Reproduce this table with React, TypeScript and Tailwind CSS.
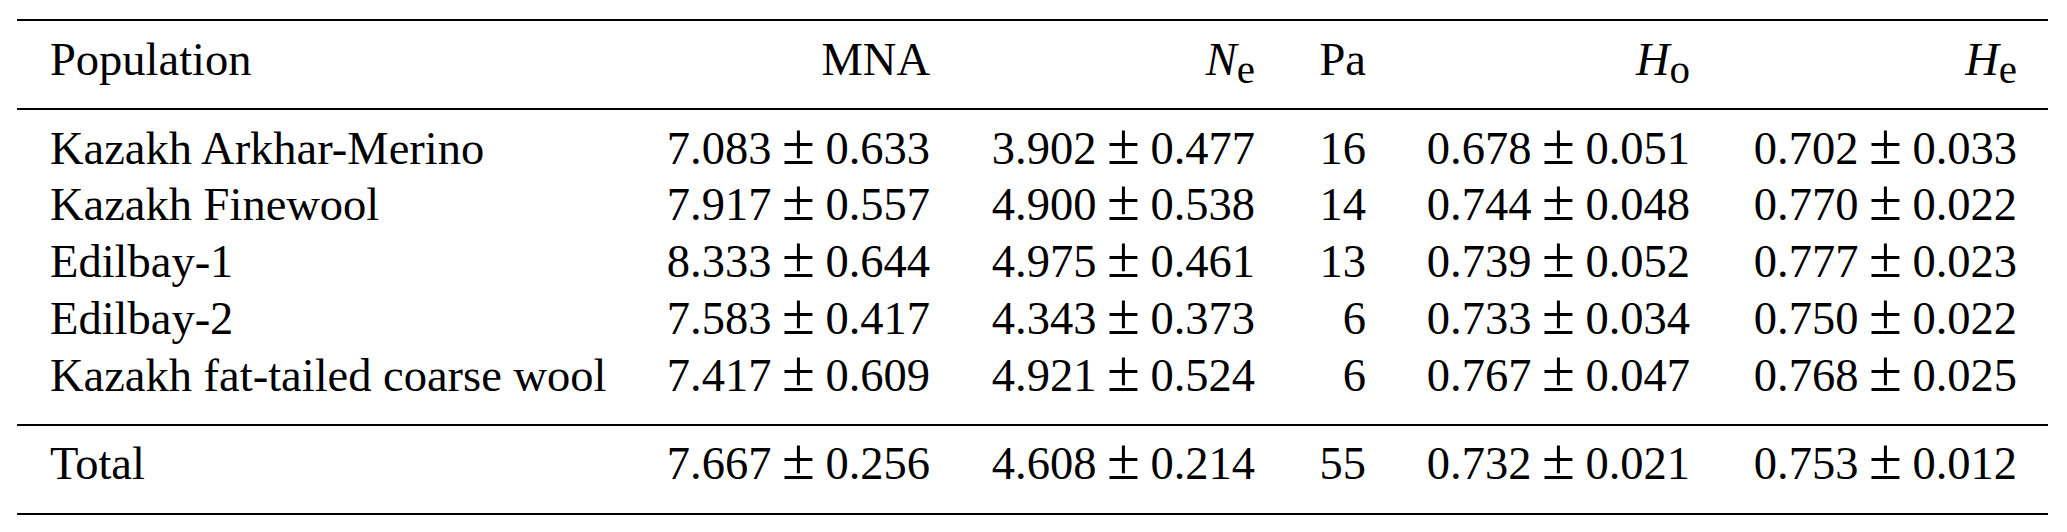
import React from "react";

type Row = {
  name: string;
  mna: [string, string];
  ne: [string, string];
  pa: string;
  ho: [string, string];
  he: [string, string];
};

const rows: Row[] = [
  { name: "Kazakh Arkhar-Merino", mna: ["7.083", "0.633"], ne: ["3.902", "0.477"], pa: "16", ho: ["0.678", "0.051"], he: ["0.702", "0.033"] },
  { name: "Kazakh Finewool", mna: ["7.917", "0.557"], ne: ["4.900", "0.538"], pa: "14", ho: ["0.744", "0.048"], he: ["0.770", "0.022"] },
  { name: "Edilbay-1", mna: ["8.333", "0.644"], ne: ["4.975", "0.461"], pa: "13", ho: ["0.739", "0.052"], he: ["0.777", "0.023"] },
  { name: "Edilbay-2", mna: ["7.583", "0.417"], ne: ["4.343", "0.373"], pa: "6", ho: ["0.733", "0.034"], he: ["0.750", "0.022"] },
  { name: "Kazakh fat-tailed coarse wool", mna: ["7.417", "0.609"], ne: ["4.921", "0.524"], pa: "6", ho: ["0.767", "0.047"], he: ["0.768", "0.025"] },
];

const total: Row = { name: "Total", mna: ["7.667", "0.256"], ne: ["4.608", "0.214"], pa: "55", ho: ["0.732", "0.021"], he: ["0.753", "0.012"] };

const grid = "grid grid-cols-[560px_320px_325px_111px_324px_327px] pl-[33px] pr-[31px] whitespace-nowrap";

function PlusMinus({ v }: { v: [string, string] }) {
  return (
    <span>
      {v[0]}
      <span className="inline-block w-[54px] text-center text-[60px] leading-[40px]">±</span>
      {v[1]}
    </span>
  );
}

function Sym({ main, sub }: { main: string; sub: string }) {
  return (
    <span>
      <span className="italic">{main}</span>
      <span className="relative top-[8px] text-[41px]">{sub}</span>
    </span>
  );
}

function DataRow({ row }: { row: Row }) {
  return (
    <div className={grid}>
      <div>{row.name}</div>
      <div className="text-right"><PlusMinus v={row.mna} /></div>
      <div className="text-right"><PlusMinus v={row.ne} /></div>
      <div className="text-right">{row.pa}</div>
      <div className="text-right"><PlusMinus v={row.ho} /></div>
      <div className="text-right"><PlusMinus v={row.he} /></div>
    </div>
  );
}

export default function App() {
  return (
    <div className="h-[532px] w-[2067px] bg-white pl-[17px] pt-[19px] [font-family:Liberation_Serif,Times_New_Roman,serif] text-[46.5px] leading-[56.7px] text-black">
      <div className="w-[2031px] border-y-2 border-black">
        {/* header */}
        <div className={`${grid} border-b-2 border-black pt-[11px] pb-[18px]`}>
          <div>Population</div>
          <div className="text-right">MNA</div>
          <div className="text-right"><Sym main="N" sub="e" /></div>
          <div className="text-right">Pa</div>
          <div className="text-right"><Sym main="H" sub="o" /></div>
          <div className="text-right"><Sym main="H" sub="e" /></div>
        </div>

        {/* populations */}
        <div className="border-b-2 border-black pt-[11px] pb-[20px]">
          {rows.map((r) => (
            <DataRow key={r.name} row={r} />
          ))}
        </div>

        {/* total */}
        <div className="pt-[10px] pb-[20px]">
          <DataRow row={total} />
        </div>
      </div>
    </div>
  );
}
